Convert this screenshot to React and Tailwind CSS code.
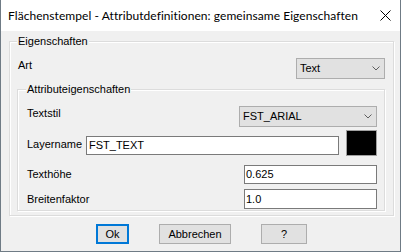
export default function App() {
  const Chevron = () => (
    <svg width="8" height="5" viewBox="0 0 8 5" className="shrink-0">
      <path d="M0.5 0.5 L4 4 L7.5 0.5" fill="none" stroke="#5f5f5f" strokeWidth="1" />
    </svg>
  );
  return (
    <div className="w-[401px] h-[252px] flex flex-col border-x border-b border-[#6f7b85] bg-[#f0f0f0] text-[11px] leading-[13px] text-black font-['Liberation_Sans',Arial,sans-serif] overflow-hidden">
      <div className="h-[31px] shrink-0 bg-white flex items-center pl-[7px]">
        <span className="text-[12px] leading-[16px] tracking-[0.06px] font-['Lato',sans-serif]">
          Flächenstempel - Attributdefinitionen: gemeinsame Eigenschaften
        </span>
        <svg className="ml-auto mr-[9px]" width="11" height="11" viewBox="0 0 11 11">
          <path d="M0.5 0.5 L10.5 10.5 M10.5 0.5 L0.5 10.5" stroke="#000" strokeWidth="1" />
        </svg>
      </div>

      <div className="relative mt-[10px] ml-[8px] w-[385px] h-[175px] shrink-0 border border-[#dcdcdc] shadow-[1px_1px_0_#fff,inset_1px_1px_0_#fff] flex flex-col">
        <span className="absolute left-[7px] top-[-7px] px-[1px] bg-[#f0f0f0]">Eigenschaften</span>

        <div className="flex items-start mt-[16px] pl-[8px] pr-[8px]">
          <span className="mt-[1px]">Art</span>
          <div className="ml-auto w-[89px] h-[21px] border border-[#adadad] bg-[#e1e1e1] flex items-center pl-[3px] pr-[4px]">
            <span>Text</span>
            <span className="ml-auto flex"><Chevron /></span>
          </div>
        </div>

        <div className="relative mt-[10px] ml-[7px] w-[368px] h-[122px] border border-[#dcdcdc] shadow-[1px_1px_0_#fff,inset_1px_1px_0_#fff] flex flex-col">
          <span className="absolute left-[8px] top-[-7px] px-[1px] bg-[#f0f0f0]">Attributeigenschaften</span>

          <div className="flex items-start mt-[16px] pl-[9px] pr-[7px]">
            <span className="mt-[1px]">Textstil</span>
            <div className="ml-auto w-[138px] h-[21px] border border-[#adadad] bg-[#e1e1e1] flex items-center pl-[3px] pr-[4px]">
              <span>FST_ARIAL</span>
              <span className="ml-auto flex"><Chevron /></span>
            </div>
          </div>

          <div className="flex items-start mt-[3px] pl-[9px] pr-[7px]">
            <span className="w-[59px] mt-[8px]">Layername</span>
            <div className="w-[253px] h-[19px] mt-[6px] border border-[#7a7a7a] bg-white flex items-center pl-[2px]">
              FST_TEXT
            </div>
            <div className="ml-[7px] w-[31px] h-[26px] border border-[#a0a0a0] bg-black" />
          </div>

          <div className="flex items-center mt-[9px] pl-[9px] pr-[7px]">
            <span>Texthöhe</span>
            <div className="ml-auto w-[133px] h-[19px] border border-[#7a7a7a] bg-white flex items-center pl-[1px]">
              0.625
            </div>
          </div>

          <div className="flex items-center mt-[5px] pl-[9px] pr-[7px]">
            <span>Breitenfaktor</span>
            <div className="ml-auto w-[133px] h-[20px] border border-[#7a7a7a] bg-white flex items-center pl-[1px]">
              1.0
            </div>
          </div>
        </div>
      </div>

      <div className="flex mt-[8px] ml-[95px] gap-[30px]">
        <div className="w-[33px] h-[20px] border-2 border-[#0078d7] bg-[#e1e1e1] flex items-center justify-center">Ok</div>
        <div className="w-[72px] h-[20px] border border-[#adadad] bg-[#e1e1e1] flex items-center justify-center">Abbrechen</div>
        <div className="w-[46px] h-[20px] border border-[#adadad] bg-[#e1e1e1] flex items-center justify-center">?</div>
      </div>
    </div>
  );
}
